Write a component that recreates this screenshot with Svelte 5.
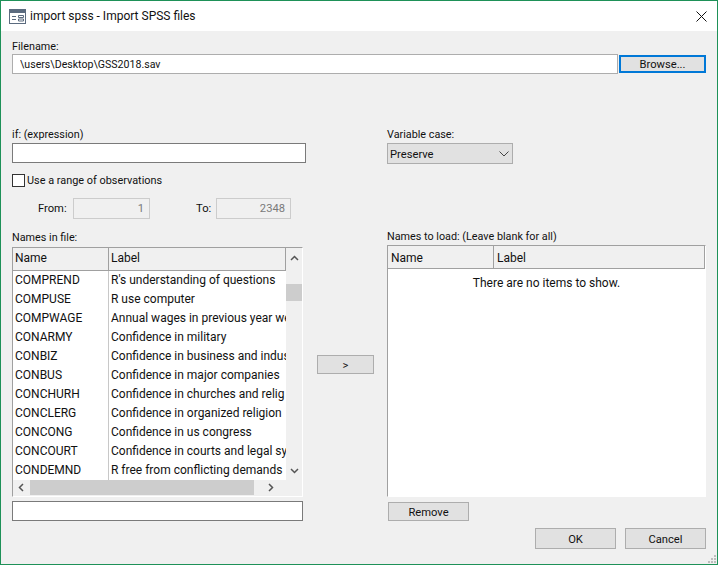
<script>
    const rows = [
        ["COMPREND", "R's understanding of questions"],
        ["COMPUSE", "R use computer"],
        ["COMPWAGE", "Annual wages in previous year we"],
        ["CONARMY", "Confidence in military"],
        ["CONBIZ", "Confidence in business and indus"],
        ["CONBUS", "Confidence in major companies"],
        ["CONCHURH", "Confidence in churches and relig"],
        ["CONCLERG", "Confidence in organized religion"],
        ["CONCONG", "Confidence in us congress"],
        ["CONCOURT", "Confidence in courts and legal sy"],
        ["CONDEMND", "R free from conflicting demands"]
    ];
</script>

<div class="window">
    <div class="titlebar">
        <svg class="appicon" width="17" height="15" viewBox="0 0 17 15">
            <rect x="0.5" y="0.5" width="16" height="14" fill="#fff" stroke="#5b6b7f" />
            <rect x="1" y="1" width="15" height="3" fill="#5b6b7f" />
            <path d="M3 7.5h4M3 10.5h4M9.500 6.500h5v2h-5zM9.500 10h5v2h-5z" fill="none" stroke="#5b6b7f" />
        </svg>
        <span class="title">import spss - Import SPSS files</span>
        <svg class="close" width="11" height="11" viewBox="0 0 11 11">
            <path d="M0.5 0.5L10.5 10.5M10.5 0.5L0.5 10.5" stroke="#111" fill="none" />
        </svg>
    </div>

    <div class="body">
        <div class="file">
            <label class="cap" for="fname">Filename:</label>
            <div class="filerow">
                <input id="fname" class="field fname" value="\users\Desktop\GSS2018.sav" />
                <button class="btn browse">Browse...</button>
            </div>
        </div>

        <div class="columns">
            <div class="left">
                <label class="cap" for="ifexpr">if: (expression)</label>
                <input id="ifexpr" class="field ifexpr" />

                <label class="check">
                    <span class="box"></span>
                    Use a range of observations
                </label>

                <div class="range">
                    <span class="fromlabel">From:</span>
                    <div class="spin from">1</div>
                    <span class="tolabel">To:</span>
                    <div class="spin to">2348</div>
                </div>

                <div class="cap names">Names in file:</div>
                <div class="list filelist">
                    <div class="listmain">
                        <div class="head">
                            <div class="c1">Name</div>
                            <div class="c2">Label</div>
                        </div>
                        {#each rows as r}
                            <div class="row">
                                <div class="c1">{r[0]}</div>
                                <div class="c2">{r[1]}</div>
                            </div>
                        {/each}
                    </div>
                    <div class="vscroll">
                        <svg width="9" height="6" viewBox="0 0 9 6"><path d="M1 5L4.500 1.500L8 5" fill="none" stroke="#555" stroke-width="1.500" /></svg>
                        <div class="vtrack"><div class="vthumb"></div></div>
                        <svg width="9" height="6" viewBox="0 0 9 6"><path d="M1 1L4.500 4.500L8 1" fill="none" stroke="#555" stroke-width="1.500" /></svg>
                    </div>
                    <div class="hscroll">
                        <svg width="6" height="9" viewBox="0 0 6 9"><path d="M5 1L1.500 4.500L5 8" fill="none" stroke="#555" stroke-width="1.500" /></svg>
                        <div class="hthumb"></div>
                        <svg width="6" height="9" viewBox="0 0 6 9"><path d="M1 1L4.500 4.500L1 8" fill="none" stroke="#555" stroke-width="1.500" /></svg>
                    </div>
                </div>
                <input class="field search" />
            </div>

            <div class="mid">
                <button class="btn add">&gt;</button>
            </div>

            <div class="right">
                <div class="cap">Variable case:</div>
                <div class="select">
                    <span>Preserve</span>
                    <svg width="10" height="6" viewBox="0 0 10 6"><path d="M0.500 0.500L5 5L9.500 0.500" fill="none" stroke="#444" /></svg>
                </div>

                <div class="cap loadcap">Names to load: (Leave blank for all)</div>
                <div class="list loadlist">
                    <div class="head">
                        <div class="c1">Name</div>
                        <div class="c2">Label</div>
                    </div>
                    <div class="empty">There are no items to show.</div>
                </div>

                <button class="btn remove">Remove</button>
            </div>
        </div>

        <div class="footer">
            <button class="btn action">OK</button>
            <button class="btn action">Cancel</button>
        </div>
    </div>

    <svg class="grip" width="9" height="9" viewBox="0 0 9 9">
        <path d="M6 0h2v2h-2zM3 3h2v2h-2zM6 3h2v2h-2zM0 6h2v2h-2zM3 6h2v2h-2zM6 6h2v2h-2z" fill="#bdbdbd" />
    </svg>
</div>

<style>
    :global(body) {
        margin: 0;
        background: #f0f0f0;
    }

    .window {
        position: relative;
        box-sizing: border-box;
        width: 718px;
        height: 565px;
        border: 1px solid #1e9158;
        background: #f0f0f0;
        font-family: Roboto, "Open Sans", sans-serif;
        font-size: 11.2px;
        color: #111;
    }

    .titlebar {
        display: flex;
        align-items: center;
        height: 30px;
        background: #fff;
        padding: 0 10px 0 8px;
    }

    .appicon {
        margin-right: 4px;
    }

    .title {
        flex: 1;
        font-size: 12px;
    }

    .body {
        padding: 0 11px;
    }

    .cap {
        display: block;
        font-size: 10.8px;
        line-height: 16px;
    }

    .file {
        padding-top: 8px;
    }

    .file .cap {
        height: 15px;
    }

    .filerow {
        display: flex;
        gap: 1px;
    }

    .field {
        display: block;
        box-sizing: border-box;
        background: #fff;
        border: 1px solid #7a7a7a;
        font: inherit;
        color: inherit;
        outline: none;
        margin: 0;
    }

    .fname {
        width: 606px;
        height: 20px;
        padding: 0 7px;
        font-size: 10.6px;
        border-color: #adadad;
    }

    .btn {
        box-sizing: border-box;
        background: #e1e1e1;
        border: 1px solid #adadad;
        font: inherit;
        color: inherit;
        padding: 1px 0 0;
        margin: 0;
    }

    .browse {
        width: 87px;
        height: 18px;
        margin-top: 1px;
        border: 2px solid #0078d7;
    }

    .columns {
        display: flex;
        margin-top: 53px;
    }

    .left {
        width: 294px;
    }

    .ifexpr {
        width: 294px;
        height: 20px;
    }

    .check {
        display: flex;
        align-items: center;
        gap: 2px;
        height: 16px;
        margin-top: 9px;
        font-size: 10.9px;
    }

    .box {
        box-sizing: border-box;
        width: 13px;
        height: 13px;
        background: #fff;
        border: 1px solid #333;
    }

    .range {
        display: flex;
        align-items: center;
        margin-top: 10px;
    }

    .fromlabel {
        margin-left: 26px;
        width: 35px;
    }

    .tolabel {
        margin-left: 46px;
        width: 20px;
    }

    .spin {
        box-sizing: border-box;
        height: 21px;
        line-height: 19px;
        padding-right: 5px;
        text-align: right;
        color: #7a7a7a;
        background: #f0f0f0;
        border: 1px solid #ccc;
    }

    .from {
        width: 77px;
    }

    .to {
        width: 75px;
    }

    .names {
        margin-top: 11px;
        height: 17px;
    }

    .list {
        box-sizing: border-box;
        background: #fff;
        border: 1px solid #a0a0a0;
        border-right-color: #fff;
        border-bottom-color: #fff;
        font-size: 12px;
    }

    .filelist {
        display: grid;
        grid-template-columns: 273px 16px;
        grid-template-rows: 232px 16px;
        width: 291px;
        height: 250px;
        background: #f0f0f0;
    }

    .listmain {
        background: #fff;
        overflow: hidden;
    }

    .head {
        display: flex;
        box-sizing: border-box;
        height: 23px;
        line-height: 21px;
        background: #f0f0f0;
        border-bottom: 1px solid #a0a0a0;
    }

    .head .c1,
    .head .c2 {
        border-right: 1px solid #a0a0a0;
    }

    .head .c1 {
        width: 96px;
    }

    .row {
        display: flex;
        height: 19px;
        line-height: 18px;
        white-space: nowrap;
    }

    .c1 {
        box-sizing: border-box;
        flex: none;
        width: 95px;
        padding-left: 2px;
    }

    .c2 {
        box-sizing: border-box;
        flex: 1;
        min-width: 0;
        padding-left: 2px;
        overflow: hidden;
    }

    .row .c2 {
        border-left: 1px solid #c8c8c8;
    }

    .vscroll {
        display: flex;
        flex-direction: column;
        align-items: center;
        padding: 7px 0 6px;
        background: #f0f0f0;
    }

    .vtrack {
        flex: 1;
        width: 100%;
    }

    .vthumb {
        height: 17px;
        margin-top: 23px;
        background: #cdcdcd;
    }

    .hscroll {
        grid-column: 1 / 3;
        display: flex;
        align-items: center;
        padding: 0 18px 1px 5px;
        background: #f0f0f0;
    }

    .hthumb {
        height: 15px;
        width: 224px;
        margin: 0 14px 0 6px;
        background: #cdcdcd;
    }

    .search {
        width: 291px;
        height: 20px;
        margin-top: 4px;
    }

    .mid {
        width: 81px;
        box-sizing: border-box;
        padding: 228px 0 0 11px;
    }

    .add {
        width: 57px;
        height: 19px;
    }

    .right {
        width: 319px;
    }

    .select {
        display: flex;
        align-items: center;
        justify-content: space-between;
        box-sizing: border-box;
        width: 126px;
        height: 21px;
        padding: 1px 3px 0 2px;
        background: #e1e1e1;
        border: 1px solid #adadad;
    }

    .loadcap {
        margin-top: 65px;
        height: 16px;
    }

    .loadlist {
        width: 319px;
        height: 252px;
    }

    .loadlist .head {
        line-height: 24px;
    }

    .loadlist .c1 {
        width: 106px;
        padding-left: 3px;
    }

    .loadlist .c2 {
        padding-left: 3px;
    }

    .empty {
        padding-top: 6px;
        line-height: 16px;
        text-align: center;
    }

    .remove {
        display: block;
        width: 81px;
        height: 19px;
        margin: 5px 0 0 1px;
    }

    .footer {
        display: flex;
        justify-content: flex-end;
        gap: 9px;
        margin-top: 7px;
    }

    .action {
        width: 81px;
        height: 21px;
    }

    .grip {
        position: absolute;
        right: 0;
        bottom: 0;
    }
</style>
